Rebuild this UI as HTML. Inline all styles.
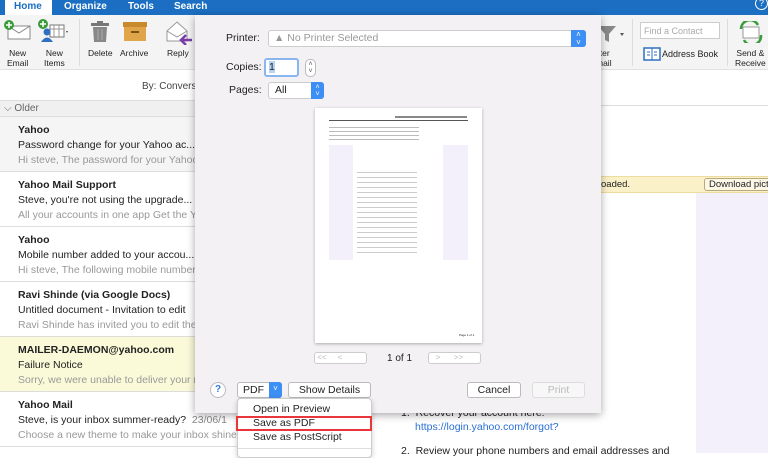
<!DOCTYPE html>
<html><head><meta charset="utf-8"><style>
*{margin:0;padding:0;box-sizing:border-box}
body{width:768px;height:453px;overflow:hidden;position:relative;font-family:"Liberation Sans",sans-serif;background:#fff;color:#222}
.a{position:absolute}
.t{font-size:9px;white-space:nowrap}
</style></head><body>
<!-- top tab bar -->
<div class="a" style="left:0;top:0;width:768px;height:15px;background:#1b6ec2"></div>
<div class="a" style="left:5px;top:0;width:47px;height:15px;background:#fff"></div>
<div class="a t" style="left:14px;top:1px;font-size:10px;color:#1b6ec2;font-weight:bold">Home</div>
<div class="a t" style="left:64px;top:1px;font-size:10px;color:#fff;font-weight:bold">Organize</div>
<div class="a t" style="left:128px;top:1px;font-size:10px;color:#fff;font-weight:bold">Tools</div>
<div class="a t" style="left:174px;top:1px;font-size:10px;color:#fff;font-weight:bold">Search</div>
<div class="a" style="left:755px;top:-3px;width:13px;height:13px;border:1px solid #fff;border-radius:50%;color:#fff;font-size:9px;text-align:center;line-height:11px">?</div>
<!-- ribbon -->
<div class="a" style="left:0;top:15px;width:768px;height:55px;background:#f4f4f4;border-bottom:1px solid #e2e2e2"></div>
<svg class="a" style="left:4px;top:19px" width="30" height="22"><rect x="4" y="7" width="22" height="13" fill="#fff" stroke="#888"/><path d="M4 7 L15 14 L26 7" stroke="#888" fill="none"/><circle cx="5" cy="6" r="5" fill="#3a9b3a"/><path d="M5 3v6M2 6h6" stroke="#fff" stroke-width="1.5"/></svg>
<div class="a t" style="left:7px;top:48px;font-size:8.5px;text-align:center;line-height:10px">New<br>Email</div>
<svg class="a" style="left:38px;top:19px" width="32" height="24"><rect x="12" y="6" width="14" height="12" fill="#fff" stroke="#777"/><path d="M12 10h14M16 6v12M21 6v12" stroke="#999"/><circle cx="9" cy="13" r="3.5" fill="#2f6fc0"/><path d="M3 23 Q9 14 15 23z" fill="#2f6fc0"/><circle cx="5" cy="5" r="5" fill="#3a9b3a"/><path d="M5 2v6M2 5h6" stroke="#fff" stroke-width="1.5"/><path d="M28 12l2 0l-1 2z" fill="#444"/></svg>
<div class="a t" style="left:44px;top:48px;font-size:8.5px;text-align:center;line-height:10px">New<br>Items</div>
<div class="a" style="left:79px;top:19px;width:1px;height:47px;background:#ddd"></div>
<svg class="a" style="left:90px;top:21px" width="20" height="22"><rect x="1" y="2" width="18" height="3" fill="#777"/><rect x="7" y="0" width="6" height="2" fill="#777"/><path d="M3 6h14l-1 15h-12z" fill="#888"/><path d="M8 8v11M12 8v11" stroke="#aaa"/></svg>
<div class="a t" style="left:88px;top:48px;font-size:8.5px">Delete</div>
<svg class="a" style="left:123px;top:22px" width="24" height="20"><rect x="0" y="0" width="24" height="5" fill="#c98a2f"/><rect x="1" y="5" width="22" height="14" fill="#e0a449"/><rect x="8" y="9" width="8" height="2" fill="#7a5217"/></svg>
<div class="a t" style="left:120px;top:48px;font-size:8.5px">Archive</div>
<svg class="a" style="left:165px;top:19px" width="28" height="26"><path d="M2 12 L12 3 L22 12 V22 H2z" fill="#fff" stroke="#999"/><path d="M2 12 L12 18 L22 12" stroke="#999" fill="none"/><path d="M27 21h-10M21 16l-5 5l5 5" stroke="#7b3ea8" stroke-width="2.5" fill="none"/></svg>
<div class="a t" style="left:167px;top:48px;font-size:8.5px">Reply</div>
<svg class="a" style="left:598px;top:24px" width="26" height="20"><path d="M0 2h18l-7 8v8l-4-2v-6z" fill="#888"/><path d="M22 9l4 0l-2 3z" fill="#555"/></svg>
<div class="a t" style="left:596px;top:48px;font-size:8.5px;line-height:10px">ilter<br>mail</div>
<div class="a" style="left:632px;top:19px;width:1px;height:47px;background:#ddd"></div>
<div class="a" style="left:640px;top:22px;width:80px;height:17px;background:#fff;border:1px solid #ccc"></div>
<div class="a t" style="left:644px;top:26px;color:#aaa">Find a Contact</div>
<svg class="a" style="left:643px;top:47px" width="18" height="14"><rect x="1" y="1" width="16" height="12" fill="#fff" stroke="#2f6fc0" stroke-width="1.5"/><path d="M9 1v12M4 5h3M4 8h3M11 5h3M11 8h3" stroke="#2f6fc0"/></svg>
<div class="a t" style="left:662px;top:49px">Address Book</div>
<div class="a" style="left:727px;top:19px;width:1px;height:47px;background:#ddd"></div>
<svg class="a" style="left:738px;top:21px" width="26" height="22"><rect x="5" y="6" width="16" height="11" fill="#fff" stroke="#999"/><path d="M3 8 A9 9 0 0 1 20 4" stroke="#3a9b3a" stroke-width="2.5" fill="none"/><path d="M23 14 A9 9 0 0 1 6 19" stroke="#3a9b3a" stroke-width="2.5" fill="none"/></svg>
<div class="a t" style="left:735px;top:48px;font-size:8.5px;line-height:10px;text-align:center">Send &amp;<br>Receive</div>
<!-- list header -->
<div class="a t" style="left:142px;top:81px;font-size:10px;color:#444">By: Conversations</div>
<div class="a" style="left:0;top:100px;width:240px;height:17px;background:#f0f0f0;border-top:1px solid #ddd;border-bottom:1px solid #ddd"></div>
<div class="a t" style="left:4px;top:103px;font-size:10px;color:#666">⌵ Older</div>
<!-- items -->
<div class="a" style="left:0;top:117px;width:240px;height:55px;background:#f5f5f5;border-bottom:1px solid #ddd"></div>
<div class="a" style="left:0;top:172px;width:240px;height:55px;border-bottom:1px solid #ddd"></div>
<div class="a" style="left:0;top:227px;width:240px;height:55px;border-bottom:1px solid #ddd"></div>
<div class="a" style="left:0;top:282px;width:240px;height:55px;border-bottom:1px solid #ddd"></div>
<div class="a" style="left:0;top:337px;width:240px;height:55px;background:#fafad9;border-bottom:1px solid #ddd"></div>
<div class="a" style="left:0;top:392px;width:240px;height:55px;border-bottom:1px solid #ddd"></div>
<div class="a" style="left:18px;top:123px;font-size:10.5px;line-height:15px;white-space:nowrap"><b style="font-weight:600">Yahoo</b><br>Password change for your Yahoo ac...<br><span style="color:#999">Hi steve, The password for your Yahoo</span></div>
<div class="a" style="left:18px;top:178px;font-size:10.5px;line-height:15px;white-space:nowrap"><b style="font-weight:600">Yahoo Mail Support</b><br>Steve, you're not using the upgrade...<br><span style="color:#999">All your accounts in one app Get the Y</span></div>
<div class="a" style="left:18px;top:233px;font-size:10.5px;line-height:15px;white-space:nowrap"><b style="font-weight:600">Yahoo</b><br>Mobile number added to your accou...<br><span style="color:#999">Hi steve, The following mobile number</span></div>
<div class="a" style="left:18px;top:288px;font-size:10.5px;line-height:15px;white-space:nowrap"><b style="font-weight:600">Ravi Shinde (via Google Docs)</b><br>Untitled document - Invitation to edit<br><span style="color:#999">Ravi Shinde has invited you to edit the</span></div>
<div class="a" style="left:18px;top:343px;font-size:10.5px;line-height:15px;white-space:nowrap"><b style="font-weight:600">MAILER-DAEMON@yahoo.com</b><br>Failure Notice<br><span style="color:#999">Sorry, we were unable to deliver your r</span></div>
<div class="a" style="left:18px;top:398px;font-size:10.5px;line-height:15px;white-space:nowrap"><b style="font-weight:600">Yahoo Mail</b><br>Steve, is your inbox summer-ready? <span style="color:#888">&nbsp;23/06/1</span><br><span style="color:#999">Choose a new theme to make your inbox shine..</span></div>
<!-- reading pane -->
<div class="a" style="left:600px;top:105px;width:168px;height:1px;background:#ddd"></div>
<div class="a" style="left:600px;top:176px;width:168px;height:17px;background:#fbf1c9;border-top:1px solid #ecdca0;border-bottom:1px solid #ecdca0"></div>
<div class="a t" style="left:601px;top:179px;font-size:9.5px">oaded.</div>
<div class="a t" style="left:704px;top:178px;width:70px;height:13px;border:1px solid #b9a97a;border-radius:3px;background:#fdf8e6;padding-left:4px;font-size:9.5px;line-height:11px">Download pictures</div>
<div class="a" style="left:696px;top:193px;width:72px;height:260px;background:#f3f0fc"></div>
<div class="a t" style="left:401px;top:407px;font-size:10.5px">1.&nbsp; Recover your account here:</div>
<div class="a t" style="left:415px;top:421px;font-size:10.5px;color:#2a6fd6">https://login.yahoo.com/forgot?</div>
<div class="a t" style="left:401px;top:445px;font-size:10.5px">2.&nbsp; Review your phone numbers and email addresses and</div>
<!-- dialog -->
<div class="a" style="left:195px;top:15px;width:406px;height:398px;background:#f3f1f3;box-shadow:0 2px 8px rgba(0,0,0,.35)"></div>
<div class="a t" style="left:226px;top:32px;font-size:10.5px">Printer:</div>
<div class="a" style="left:268px;top:30px;width:318px;height:17px;background:#fff;border:1px solid #ccc;border-radius:3px"></div>
<div class="a t" style="left:274px;top:32px;font-size:10.5px;color:#999">▲ No Printer Selected</div>
<div class="a" style="left:571px;top:30px;width:15px;height:17px;background:#3d8ef5;border-radius:0 3px 3px 0;color:#fff;font-size:8px;text-align:center;line-height:8px;padding-top:1px">˄<br>˅</div>
<div class="a t" style="left:226px;top:61px;font-size:10.5px">Copies:</div>
<div class="a" style="left:264px;top:58px;width:35px;height:19px;background:#fff;border:2px solid #8ab6f0;border-radius:3px"></div>
<div class="a t" style="left:269px;top:61px;font-size:10.5px;background:#b5d3f7">1</div>
<div class="a" style="left:305px;top:59px;width:11px;height:18px;background:#fff;border:1px solid #bbb;border-radius:5px;font-size:7px;text-align:center;line-height:7px;padding-top:1px;color:#555">˄<br>˅</div>
<div class="a t" style="left:229px;top:84px;font-size:10.5px">Pages:</div>
<div class="a" style="left:268px;top:82px;width:56px;height:17px;background:#fff;border:1px solid #ccc;border-radius:3px"></div>
<div class="a t" style="left:275px;top:84px;font-size:10.5px">All</div>
<div class="a" style="left:311px;top:82px;width:13px;height:17px;background:#3d8ef5;border-radius:0 3px 3px 0;color:#fff;font-size:7px;text-align:center;line-height:7px;padding-top:2px">˄<br>˅</div>
<!-- preview page -->
<div class="a" style="left:315px;top:108px;width:167px;height:235px;background:#fff;box-shadow:0 1px 3px rgba(0,0,0,.3)"></div>
<div class="a" style="left:329px;top:120px;width:139px;height:1px;background:#555"></div>
<div class="a" style="left:395px;top:116px;width:72px;height:2px;background:#888"></div>
<div class="a" style="left:329px;top:125px;width:90px;height:16px;background:repeating-linear-gradient(#fff 0,#fff 2px,#bbb 2px,#bbb 3px,#fff 3px,#fff 4px)"></div>
<div class="a" style="left:329px;top:145px;width:139px;height:115px;background:#f3f0fc"></div>
<div class="a" style="left:353px;top:145px;width:90px;height:115px;background:#fff"></div>
<div class="a" style="left:357px;top:168px;width:60px;height:85px;background:repeating-linear-gradient(#fff 0,#fff 4px,#ccc 4px,#ccc 5px)"></div>
<div class="a t" style="left:459px;top:333px;font-size:3px">Page 1 of 1</div>
<div class="a" style="left:314px;top:352px;width:53px;height:12px;border:1px solid #ccc;border-radius:3px;background:#fff;font-size:8px;color:#bbb;line-height:10px">&nbsp;&lt;&lt;&nbsp;&nbsp;&nbsp;&nbsp; &lt;</div>
<div class="a t" style="left:387px;top:353px;font-size:10px">1 of 1</div>
<div class="a" style="left:428px;top:352px;width:53px;height:12px;border:1px solid #ccc;border-radius:3px;background:#fff;font-size:8px;color:#bbb;line-height:10px">&nbsp;&nbsp;&nbsp;&gt;&nbsp;&nbsp;&nbsp;&nbsp;&nbsp; &gt;&gt;</div>
<!-- bottom buttons -->
<div class="a" style="left:210px;top:382px;width:16px;height:16px;border:1px solid #bbb;border-radius:50%;background:#fff;color:#2a7be4;font-size:10px;text-align:center;line-height:14px;font-weight:bold">?</div>
<div class="a" style="left:237px;top:382px;width:45px;height:16px;background:#fff;border:1px solid #bbb;border-radius:3px"></div>
<div class="a t" style="left:243px;top:384px;font-size:10.5px">PDF</div>
<div class="a" style="left:269px;top:382px;width:13px;height:16px;background:#3d8ef5;border-radius:0 3px 3px 0;color:#fff;font-size:8px;text-align:center;line-height:14px">˅</div>
<div class="a" style="left:288px;top:382px;width:83px;height:16px;background:#fff;border:1px solid #bbb;border-radius:3px;font-size:10.5px;text-align:center;line-height:14px">Show Details</div>
<div class="a" style="left:467px;top:382px;width:54px;height:16px;background:#fff;border:1px solid #bbb;border-radius:3px;font-size:10.5px;text-align:center;line-height:14px">Cancel</div>
<div class="a" style="left:532px;top:382px;width:53px;height:16px;background:#f7f7f7;border:1px solid #ddd;border-radius:3px;font-size:10.5px;text-align:center;line-height:14px;color:#bbb">Print</div>
<!-- dropdown -->
<div class="a" style="left:237px;top:398px;width:135px;height:60px;background:#fff;border:1px solid #ccc;border-radius:4px;box-shadow:0 2px 6px rgba(0,0,0,.2)"></div>
<div class="a t" style="left:253px;top:403px;font-size:10.5px">Open in Preview</div>
<div class="a t" style="left:253px;top:417px;font-size:10.5px">Save as PDF</div>
<div class="a t" style="left:253px;top:431px;font-size:10.5px">Save as PostScript</div>
<div class="a" style="left:238px;top:448px;width:133px;height:1px;background:#ddd"></div>
<div class="a" style="left:236px;top:416px;width:136px;height:15px;border:2px solid #e8363a"></div>
</body></html>
